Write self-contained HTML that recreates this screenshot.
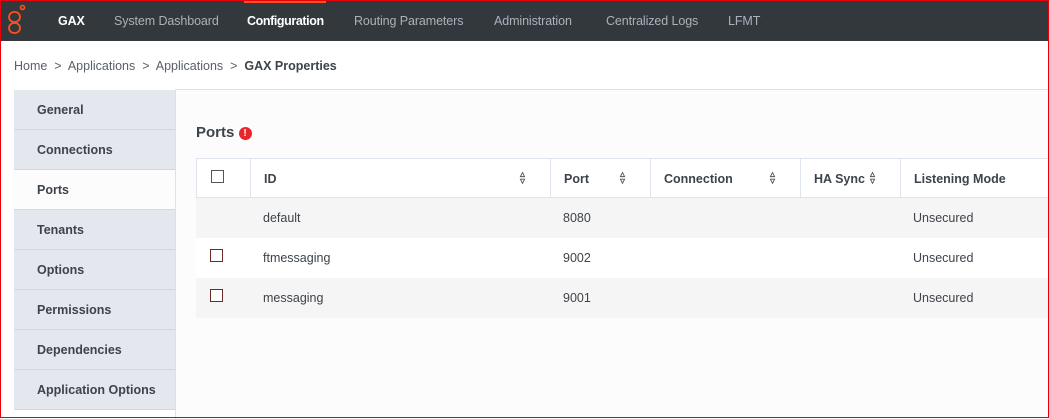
<!DOCTYPE html><html><head><style>
body{margin:0;width:1049px;height:418px;overflow:hidden;font-family:"Liberation Sans",sans-serif;background:#fff;position:relative}
.frame{position:absolute;left:0;top:0;width:1047px;height:416px;border:1px solid #e8000b;pointer-events:none;z-index:9}
.nav{position:absolute;left:0;top:0;width:1049px;height:41px;background:#33383d}
.nav span{position:absolute;top:14px;font-size:12.5px;color:#a9b2bc;letter-spacing:-0.1px}
.bc{position:absolute;left:14px;top:59px;font-size:12.5px;color:#5a6068}
.side{position:absolute;left:14px;top:90px;width:161px;}
.side div{height:39px;border-bottom:1px solid #d3d8de;background:#e4e8ee;font-size:12.5px;font-weight:bold;color:#3d434a;line-height:40px;padding-left:23px}
.side div.act{background:#fcfcfc}
.main{position:absolute;left:175px;top:89px;width:874px;height:329px;background:#fcfcfc;border-left:1px solid #dde1e6;border-top:1px solid #dde1e6}
.cb{position:absolute;width:11px;height:11px;border:1px solid #555;background:#fff}
.tbl{position:absolute;left:196px;top:158px;width:853px}
.row{position:absolute;left:0;width:853px;height:40px;font-size:12.5px;color:#3d434a}
.row span{position:absolute;top:13px}
.hd{background:#fff;border-top:1px solid #dde4ee;border-bottom:1px solid #dde4ee;height:38px;top:0;font-weight:bold}
.hd i{position:absolute;top:0;width:1px;height:39px;background:#dde4ee}
.s{position:absolute;top:12px;font-size:10px;color:#555;font-style:normal;line-height:7px}
</style></head><body>
<div class="nav">
<svg style="position:absolute;left:7px;top:4px" width="20" height="32" viewBox="0 0 20 32"><circle cx="15.5" cy="3.5" r="2" fill="none" stroke="#ff4f1f" stroke-width="1.6"/><rect x="2" y="8" width="11" height="10" rx="5" fill="none" stroke="#ff4f1f" stroke-width="1.8"/><rect x="2" y="19" width="11" height="10" rx="5" fill="none" stroke="#ff4f1f" stroke-width="1.8"/></svg>
<span style="left:58px;color:#fff;font-weight:bold">GAX</span>
<span style="left:114px">System Dashboard</span>
<div style="position:absolute;left:244px;top:0;width:82px;height:3px;background:#ff4f1f"></div>
<span style="left:247px;color:#fff;font-weight:bold;letter-spacing:-0.4px">Configuration</span>
<span style="left:354px">Routing Parameters</span>
<span style="left:494px">Administration</span>
<span style="left:606px">Centralized Logs</span>
<span style="left:728px">LFMT</span>
</div>
<div class="bc">Home &nbsp;&gt;&nbsp; Applications &nbsp;&gt;&nbsp; Applications &nbsp;&gt;&nbsp; <b style="color:#3d434a">GAX Properties</b></div>
<div class="main"></div>
<div class="side"><div>General</div><div>Connections</div><div class="act">Ports</div><div>Tenants</div><div>Options</div><div>Permissions</div><div>Dependencies</div><div>Application Options</div></div>
<div style="position:absolute;left:196px;top:124px;font-size:15px;font-weight:bold;color:#3d434a">Ports <span style="display:inline-block;width:13px;height:13px;border-radius:50%;background:#e8262b;color:#fff;font-size:10px;text-align:center;line-height:13px;vertical-align:1px">!</span></div>
<div class="tbl">
<div class="row hd"><div class="cb" style="left:15px;top:11px"></div>
<i style="left:0"></i><i style="left:54px"></i><i style="left:354px"></i><i style="left:454px"></i><i style="left:604px"></i><i style="left:704px"></i>
<span style="left:68px">ID</span><b class="s" style="left:324px">▵<br>▿</b>
<span style="left:368px">Port</span><b class="s" style="left:424px">▵<br>▿</b>
<span style="left:468px">Connection</span><b class="s" style="left:574px">▵<br>▿</b>
<span style="left:618px">HA Sync</span><b class="s" style="left:674px">▵<br>▿</b>
<span style="left:718px">Listening Mode</span></div>
<div class="row" style="top:40px;background:#f5f5f5"><span style="left:67px">default</span><span style="left:367px">8080</span><span style="left:717px">Unsecured</span></div>
<div class="row" style="top:80px;background:#fff"><div class="cb" style="left:14px;top:11px;border-color:#6b2b2b"></div><span style="left:67px">ftmessaging</span><span style="left:367px">9002</span><span style="left:717px">Unsecured</span></div>
<div class="row" style="top:120px;background:#f5f5f5"><div class="cb" style="left:14px;top:11px;border-color:#6b2b2b"></div><span style="left:67px">messaging</span><span style="left:367px">9001</span><span style="left:717px">Unsecured</span></div>
</div>
<div class="frame"></div>
</body></html>
